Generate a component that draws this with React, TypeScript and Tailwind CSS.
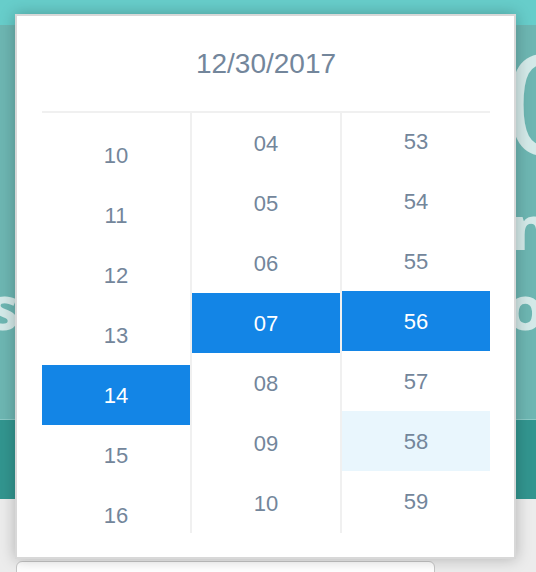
import { useState } from "react";

const hours = ["10", "11", "12", "13", "14", "15", "16"];
const minutes = ["04", "05", "06", "07", "08", "09", "10"];
const seconds = ["53", "54", "55", "56", "57", "58", "59"];

interface ColumnProps {
  items: string[];
  selected: string;
  hovered?: string;
  offset: string;
  divider?: boolean;
}

function Column({ items, selected, hovered, offset, divider }: ColumnProps) {
  return (
    <div className={`h-[420px] flex-1 overflow-hidden ${divider ? "border-l-2 border-[#f0f0f0]" : ""}`}>
      <ul className={offset}>
        {items.map((item) => (
          <li
            key={item}
            className={`flex h-[60px] items-center justify-center text-[22px] ${
              item === selected
                ? "bg-[#1385e6] text-white"
                : item === hovered
                ? "bg-[#e9f6fd] text-[#73869b]"
                : "text-[#73869b]"
            }`}
          >
            {item}
          </li>
        ))}
      </ul>
    </div>
  );
}

export default function App() {
  const [date] = useState("12/30/2017");

  return (
    <div className="relative h-[572px] w-[536px] overflow-hidden bg-[#ececec] font-['Liberation_Sans',Arial,sans-serif]">
      {/* page behind the picker */}
      <div className="h-[25px] bg-[#67cdca]" />
      <div className="h-[395px] overflow-hidden whitespace-nowrap border-b border-[#8ccac6] bg-[#6db6b2] font-['Open_Sans',sans-serif] text-white/70">
        <div className="pt-[8px] pl-[505px] font-['Liberation_Sans',Arial,sans-serif] text-[145px] leading-none">0</div>
        <div className="mt-[19px] pl-[511px] text-[60px] font-bold leading-none">m</div>
        <div className="mt-[20px] flex text-[60px] font-bold leading-none">
          <span className="-ml-[11px]">s</span>
          <span className="ml-[488px]">o</span>
        </div>
      </div>
      <div className="h-[79px] bg-[#32958f]" />
      <div className="px-4 pt-[62px]">
        <div className="h-[40px] w-[419px] rounded-md border border-[#c6c6c6] bg-white" />
      </div>

      {/* time picker popup */}
      <div className="absolute left-[15px] top-[14px] w-[501px] border-2 border-[#d8d8d8] bg-white shadow-[0_0_14px_rgba(0,0,0,0.25)]">
        <div className="pl-[25px] pr-[24px] pb-[24px]">
          <div className="flex h-[97px] items-center justify-center border-b-2 border-[#f0f0f0] text-[28px] text-[#73869b]">
            {date}
          </div>
          <div className="flex">
            <Column items={hours} selected="14" offset="mt-[12px]" />
            <Column items={minutes} selected="07" offset="mt-0" divider />
            <Column items={seconds} selected="56" hovered="58" offset="-mt-[2px]" divider />
          </div>
        </div>
      </div>
    </div>
  );
}
